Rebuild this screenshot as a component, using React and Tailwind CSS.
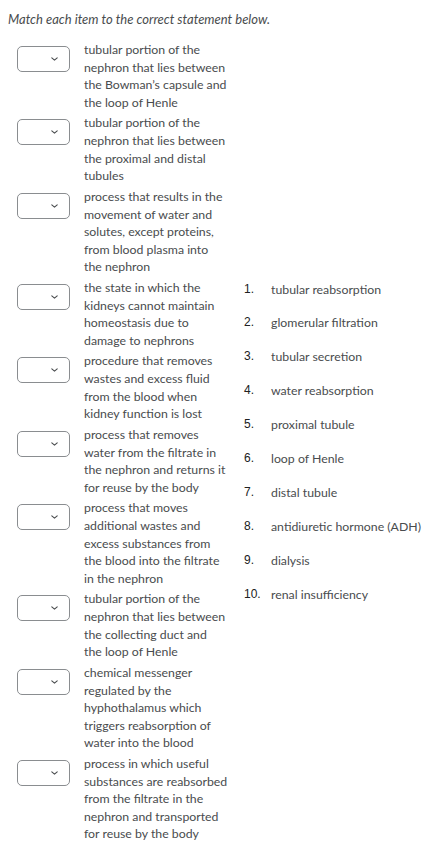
import React from 'react';

const items = [
  ['tubular portion of the', 'nephron that lies between', 'the Bowman\u2019s capsule and', 'the loop of Henle'],
  ['tubular portion of the', 'nephron that lies between', 'the proximal and distal', 'tubules'],
  ['process that results in the', 'movement of water and', 'solutes, except proteins,', 'from blood plasma into', 'the nephron'],
  ['the state in which the', 'kidneys cannot maintain', 'homeostasis due to', 'damage to nephrons'],
  ['procedure that removes', 'wastes and excess fluid', 'from the blood when', 'kidney function is lost'],
  ['process that removes', 'water from the filtrate in', 'the nephron and returns it', 'for reuse by the body'],
  ['process that moves', 'additional wastes and', 'excess substances from', 'the blood into the filtrate', 'in the nephron'],
  ['tubular portion of the', 'nephron that lies between', 'the collecting duct and', 'the loop of Henle'],
  ['chemical messenger', 'regulated by the', 'hyphothalamus which', 'triggers reabsorption of', 'water into the blood'],
  ['process in which useful', 'substances are reabsorbed', 'from the filtrate in the', 'nephron and transported', 'for reuse by the body'],
];

const answers = [
  'tubular reabsorption',
  'glomerular filtration',
  'tubular secretion',
  'water reabsorption',
  'proximal tubule',
  'loop of Henle',
  'distal tubule',
  'antidiuretic hormone (ADH)',
  'dialysis',
  'renal insufficiency',
];

function SelectBox() {
  return (
    <div className="mt-[5px] flex h-[26px] w-[53px] shrink-0 items-center justify-end rounded-[5px] border border-[#8a8d90] bg-white pr-[11px]">
      <svg width="7" height="4" viewBox="0 0 7 4" fill="none">
        <path d="M0.8 0.8 L3.5 3.2 L6.2 0.8" stroke="#494c4e" strokeWidth="1.1" strokeLinecap="round" strokeLinejoin="round" />
      </svg>
    </div>
  );
}

export default function App() {
  return (
    <div className="min-h-screen bg-white text-[#494c4e]" style={{ fontFamily: 'Lato, "Open Sans", sans-serif' }}>
      <p className="px-2 pt-[10px] text-[13px] italic leading-[18px]">Match each item to the correct statement below.</p>

      <div className="mt-[13px] flex items-center">
        <div className="flex w-[227px] shrink-0 flex-col gap-[3.3px] pl-[17px]">
          {items.map((lines, i) => (
            <div key={i} className="flex gap-[14px]">
              <SelectBox />
              <div className="whitespace-nowrap text-[12.3px] leading-[17.55px]">
                {lines.map((l, j) => (
                  <div key={j}>{l}</div>
                ))}
              </div>
            </div>
          ))}
        </div>

        <ol className="ml-[17px] flex flex-col gap-[16.3px]">
          {answers.map((a, i) => (
            <li key={i} className="flex text-[12.3px] leading-[17.6px]">
              <span className="w-[27px] shrink-0 text-[12px] text-[#202122]" style={{ fontFamily: '"Liberation Sans", Arial, sans-serif' }}>
                {i + 1}.
              </span>
              <span>{a}</span>
            </li>
          ))}
        </ol>
      </div>
    </div>
  );
}
